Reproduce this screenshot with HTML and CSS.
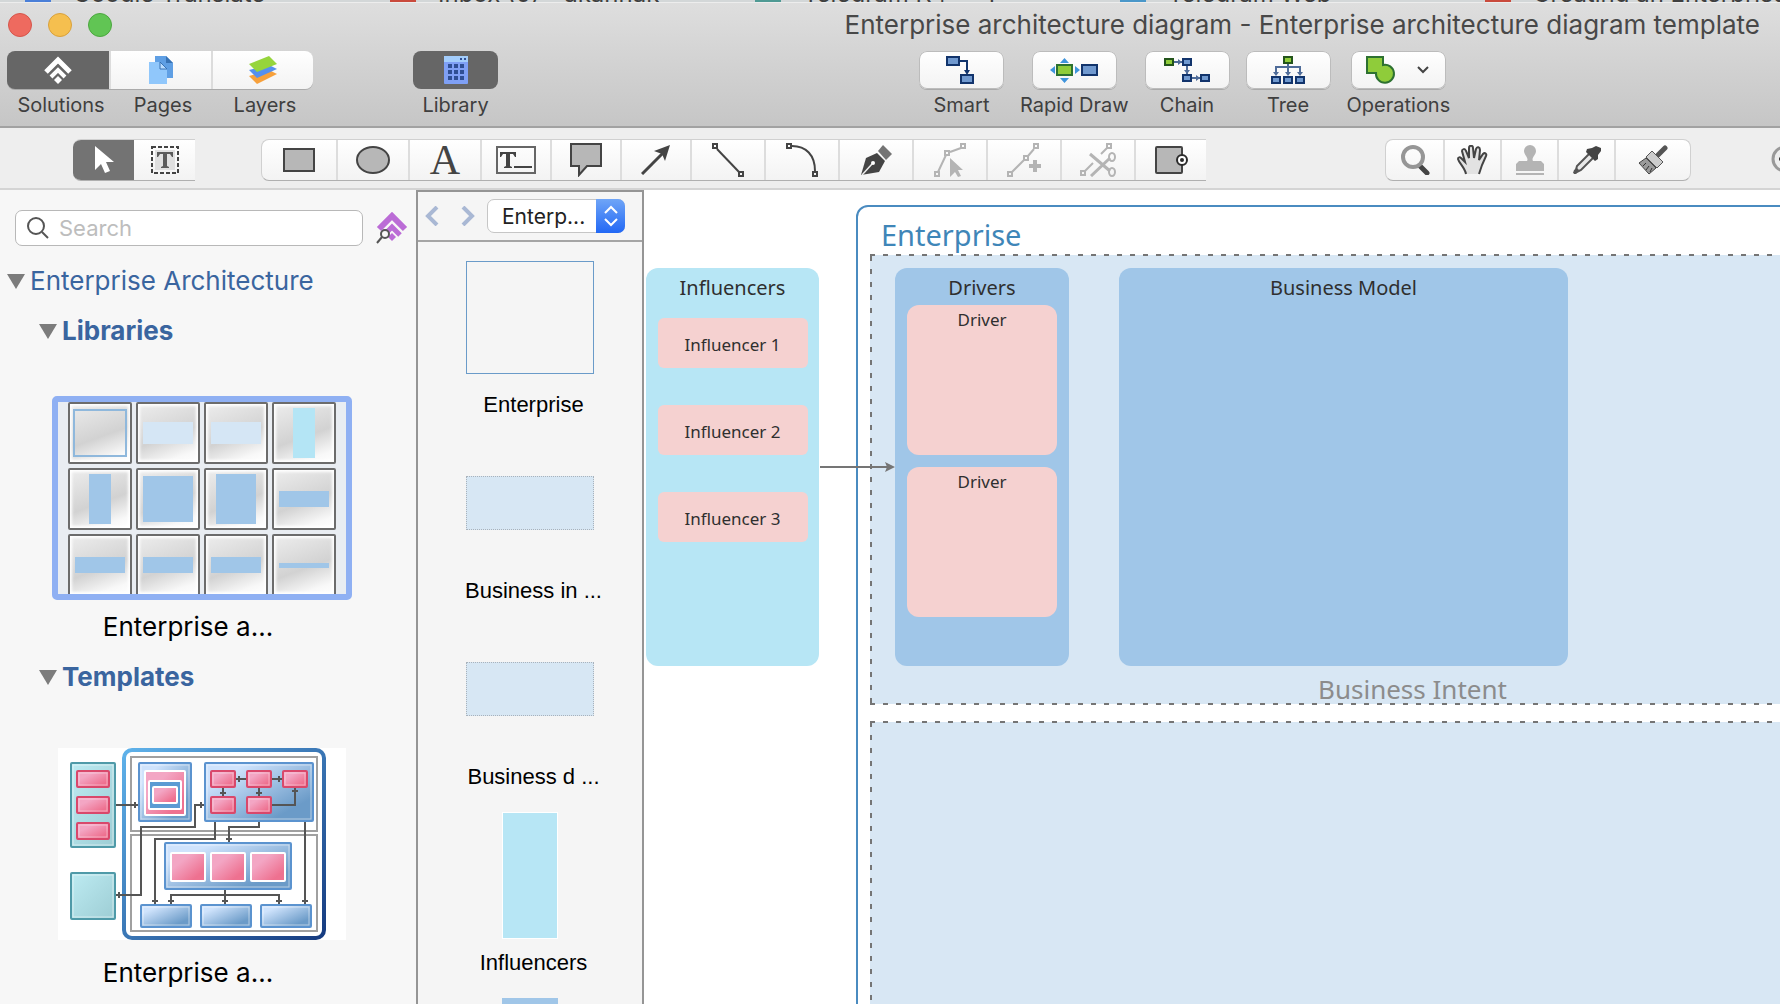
FILE: index.html
```html
<!DOCTYPE html>
<html lang="en">
<head>
	<meta charset="utf-8">
	<title>Enterprise architecture diagram</title>
	<link rel="stylesheet" href="styles.css">
</head>
<body>
	<!-- browser tabs behind the window -->
	<div class="tabs">
		<span class="fav blue"></span><span class="tab">Google Translate</span>
		<span class="fav red"></span><span class="tab">Inbox (0) - akannak</span>
		<span class="fav teal"></span><span class="tab">Telegram K | — Y</span>
		<span class="fav sky"></span><span class="tab">Telegram Web</span>
		<span class="fav red"></span><span class="tab">Creating an Enterprise</span>
	</div>

	<header class="titlebar">
		<div class="title-row">
			<div class="lights">
				<button class="light close" aria-label="Close"></button>
				<button class="light minimize" aria-label="Minimize"></button>
				<button class="light maximize" aria-label="Zoom"></button>
			</div>
			<h1>Enterprise architecture diagram - Enterprise architecture diagram template</h1>
		</div>
		<nav class="main-tools">
			<div class="segments">
				<button class="tool active">
					<span class="face">
						<svg width="28" height="28" viewBox="0 0 28 28" fill="none" stroke="#fff" stroke-width="5"><path d="M2 16L14 4l12 12"/><path d="M7 21l7-7 7 7" stroke-width="4"/><path d="M14 20l4 4-4 4-4-4z" fill="#fff" stroke="none"/></svg>
					</span>
					<span class="label">Solutions</span>
				</button>
				<button class="tool">
					<span class="face">
						<svg width="24" height="28" viewBox="0 0 24 28"><path d="M6 0h11l7 7v15H6z" fill="#5f9fe4"/><path d="M17 0v7h7z" fill="#3873b5"/><path d="M0 6h11l7 7v15H0z" fill="#90c7fb"/><path d="M11 6v7h7z" fill="#b8dcff" stroke="#3873b5"/></svg>
					</span>
					<span class="label">Pages</span>
				</button>
				<button class="tool">
					<span class="face">
						<svg width="28" height="28" viewBox="0 0 28 28"><path d="M0 20l20-6 8 4-20 10z" fill="#f7a13c"/><path d="M0 14l20-5 8 4-20 9z" fill="#5590ef"/><path d="M0 8l20-8 8 8-20 8z" fill="#96d53c"/></svg>
					</span>
					<span class="label">Layers</span>
				</button>
			</div>
			<button class="tool active library">
				<span class="face">
					<svg width="24" height="28" viewBox="0 0 24 28"><rect width="24" height="28" rx="1" fill="#7fa0f5"/><path d="M0 0h24v6H0z" fill="#a3cdfb"/><path d="M16 2h2v2h-2zM20 2h2v2h-2zM4 8h4v4H4zM10 8h4v4h-4zM16 8h4v4h-4zM4 14h4v4H4zM10 14h4v4h-4zM16 14h4v4h-4zM4 20h4v4H4zM10 20h4v4h-4zM16 20h4v4h-4z" fill="#2f4f94"/></svg>
				</span>
				<span class="label">Library</span>
			</button>
			<div class="actions">
				<button class="tool">
					<span class="face">
						<svg width="32" height="28" viewBox="0 0 32 28" fill="#7099cf" stroke="#12346c" stroke-width="2"><path d="M14 5h7v10" fill="none"/><path d="M18 14h6l-3 5z" fill="#12346c" stroke="none"/><rect x="1" y="1" width="12" height="8"/><rect x="15" y="19" width="12" height="8"/></svg>
					</span>
					<span class="label">Smart</span>
				</button>
				<button class="tool">
					<span class="face">
						<svg width="48" height="26" viewBox="0 0 48 26"><path d="M10 6l4.500-5L19 6zM10 21l4.500 5 4.500-5zM5 9v8l-5-4zM25 9v8l5-4z" fill="#3f94dc"/><rect x="7" y="8" width="15" height="10" fill="#8fcc3a" stroke="#2d7131" stroke-width="2"/><rect x="32" y="8" width="15" height="10" fill="#7099cf" stroke="#12346c" stroke-width="2"/></svg>
					</span>
					<span class="label">Rapid Draw</span>
				</button>
				<button class="tool">
					<span class="face">
						<svg width="46" height="26" viewBox="0 0 46 26" stroke-width="2"><path d="M10 5h8M23 9v8M28 21h8" stroke="#4f6c99"/><path d="M14 2v6l4-3zM20 13h6l-3 4zM32 18v6l4-3z" fill="#4f6c99"/><rect x="1" y="2" width="8" height="6" fill="#8fcc3a" stroke="#23541b"/><g fill="#7099cf" stroke="#12346c"><rect x="19" y="2" width="8" height="6"/><rect x="19" y="18" width="8" height="6"/><rect x="37" y="18" width="8" height="6"/></g></svg>
					</span>
					<span class="label">Chain</span>
				</button>
				<button class="tool">
					<span class="face">
						<svg width="34" height="28" viewBox="0 0 34 28" stroke-width="2"><path d="M17 8v10M5 18v-7h24v7" fill="none" stroke="#4f6c99"/><path d="M2 16h6l-3 4zM14 16h6l-3 4zM26 16h6l-3 4z" fill="#4f6c99"/><rect x="13" y="1" width="8" height="6" fill="#8fcc3a" stroke="#23541b"/><g fill="#7099cf" stroke="#12346c"><rect x="1" y="21" width="8" height="6"/><rect x="13" y="21" width="8" height="6"/><rect x="25" y="21" width="8" height="6"/></g></svg>
					</span>
					<span class="label">Tree</span>
				</button>
				<button class="tool">
					<span class="face wide">
						<svg width="30" height="28" viewBox="0 0 30 28"><path d="M1 1h16v8a9 9 0 1 1-7 8H1z" fill="#8fcc3a" stroke="#2d7131" stroke-width="2"/></svg>
						<svg width="14" height="10" viewBox="0 0 14 10"><path d="M2 2l5 5 5-5" fill="none" stroke="#444" stroke-width="2"/></svg>
					</span>
					<span class="label">Operations</span>
				</button>
			</div>
		</nav>
	</header>

	<div class="drawbar">
		<div class="group select-group">
			<button class="active" aria-label="Select"><svg width="20" height="28" viewBox="0 0 20 28"><path d="M1 0v24l6-6 4 9 5-2-4-9h8z" fill="#fff"/></svg></button>
			<button aria-label="Select text"><svg width="28" height="28" viewBox="0 0 28 28"><path d="M4 4h20v20H4z" fill="#e0e0e0"/><rect x="1" y="1" width="26" height="26" fill="none" stroke="#444" stroke-width="2" stroke-dasharray="4 2"/><path d="M6 6h16v5h-1l-2-3h-3v12l2 1v1h-8v-1l2-1V8H9l-2 3H6z" fill="#5a5a5a"/></svg></button>
		</div>
		<div class="group shape-group">
			<button aria-label="Rectangle"><svg width="32" height="24" viewBox="0 0 32 24"><rect x="1" y="1" width="30" height="22" fill="#b7b7b7" stroke="#444" stroke-width="2"/></svg></button>
			<button class="medium" aria-label="Ellipse"><svg width="34" height="28" viewBox="0 0 34 28"><ellipse cx="17" cy="14" rx="16" ry="13" fill="#b7b7b7" stroke="#444" stroke-width="2"/></svg></button>
			<button class="medium letter">A</button>
			<button class="narrow" aria-label="Text box"><svg width="40" height="28" viewBox="0 0 40 28"><rect x="1" y="1" width="38" height="26" fill="none" stroke="#666" stroke-width="2"/><path d="M4 6h16v5h-1l-2-3h-3v12l2 1v1H8v-1l2-1V8H7l-2 3H4zM18 20h18v2H18z" fill="#444"/></svg></button>
			<button class="narrow" aria-label="Callout"><svg width="32" height="34" viewBox="0 0 32 34"><path d="M1 1h30v22H17l-8 9v-9H1z" fill="#b7b7b7" stroke="#444" stroke-width="2"/></svg></button>
			<button class="narrow" aria-label="Arrow"><svg width="30" height="30" viewBox="0 0 30 30"><path d="M1 29L22 8" stroke="#444" stroke-width="3"/><path d="M29 0l-5 16-3-7-8-3z" fill="#444"/></svg></button>
			<button aria-label="Line"><svg width="32" height="34" viewBox="0 0 32 34" fill="none" stroke="#444" stroke-width="2"><path d="M5 6l22 23"/><path d="M1 1h4v4H1zM27 29h4v4h-4z"/></svg></button>
			<button aria-label="Arc"><svg width="32" height="34" viewBox="0 0 32 34" fill="none" stroke="#444" stroke-width="2"><path d="M6 3c14 0 23 9 23 25"/><path d="M1 1h4v4H1zM27 29h4v4h-4z"/></svg></button>
			<button aria-label="Pen"><svg width="31" height="31" viewBox="0 0 31 31"><path d="M0 30L5 13l11-5 8 8-6 11z" fill="#444"/><path d="M1 30l10-11" stroke="#eee" stroke-width="1.500"/><circle cx="12" cy="18" r="2" fill="#fff"/><path d="M17 6l5-6 9 9-6 6z" fill="#747474"/></svg></button>
			<button aria-label="Edit points"><svg width="32" height="34" viewBox="0 0 32 34" fill="none" stroke="#b4b4b4" stroke-width="2"><path d="M4 29L12 12M16 9l11-4"/><path d="M1 29h4v4H1zM11 8h4v4h-4zM27 1h4v4h-4z"/><path d="M16 15v19l5-5 3 5 3-1-3-6h5z" fill="#b4b4b4" stroke="none"/></svg></button>
			<button aria-label="Add point"><svg width="34" height="34" viewBox="0 0 34 34" fill="none" stroke="#b4b4b4" stroke-width="2"><path d="M5 29l12-12M21 13l6-7"/><path d="M1 29h4v4H1zM17 13h4v4h-4zM27 1h4v4h-4z"/><path d="M28 17v12M22 23h12" stroke-width="4"/></svg></button>
			<button aria-label="Split"><svg width="36" height="34" viewBox="0 0 36 34" fill="none" stroke="#b4b4b4" stroke-width="2"><path d="M5 28l8-8M21 11l6-6"/><path d="M1 28h4v4H1zM27 1h4v4h-4z"/><path d="M10 11l20 17M11 33l19-18" stroke-width="3"/><ellipse cx="32" cy="14" rx="3" ry="4"/><ellipse cx="32" cy="29" rx="3" ry="4"/></svg></button>
			<button class="medium" aria-label="Action"><svg width="33" height="28" viewBox="0 0 33 28"><rect x="1" y="1" width="26" height="26" rx="1" fill="#b7b7b7" stroke="#444" stroke-width="2"/><circle cx="27" cy="14" r="5" fill="#fff" stroke="#2b2b2b" stroke-width="2"/><circle cx="27" cy="14" r="2" fill="#2b2b2b"/></svg></button>
		</div>
		<div class="group view-group">
			<button aria-label="Magnifier"><svg width="30" height="30" viewBox="0 0 30 30" fill="none"><path d="M20 21l7 7" stroke="#444" stroke-width="5" stroke-linecap="round"/><circle cx="13" cy="12" r="10" stroke="#969696" stroke-width="4"/></svg></button>
			<button aria-label="Hand"><svg width="32" height="30" viewBox="0 0 32 30"><path d="M9 29C8 23 2 18 1 14c0-2 2-2 3-1l4 4L5 6c0-2 3-3 4 0l3 7V3c0-3 4-3 4 0l1 10 2-9c1-3 4-2 4 1l-1 10 4-6c2-2 4 0 3 2l-4 9-3 9" fill="#e2e2e2" stroke="#444" stroke-width="2"/></svg></button>
			<button aria-label="Stamp"><svg width="28" height="30" viewBox="0 0 28 30"><path d="M11 16c2-3-3-6-3-10a6 6 0 0 1 12 0c0 4-5 7-3 10h8l3 3v7H0v-7l3-3zM0 28h28v2H0z" fill="#b4b4b4"/></svg></button>
			<button aria-label="Eyedropper"><svg width="28" height="28" viewBox="0 0 28 28"><path d="M2 27l2-7L17 7l4 4L8 24z" fill="#e8e8e8" stroke="#555" stroke-width="2"/><path d="M1 24l3-2 2 2-3 4-3-1z" fill="#555"/><path d="M14 3l5-1 4-2 5 2v3l-3 4v4l-3 2-9-9z" fill="#444"/></svg></button>
			<button class="format" aria-label="Format brush"><svg width="30" height="30" viewBox="0 0 30 30"><path d="M20 10l7-7" stroke="#555" stroke-width="5" stroke-linecap="round"/><path d="M8 13l10 10-7 6L1 18z" fill="#9a9a9a" stroke="#444"/><path d="M14 6l11 11-6 6L8 12z" fill="#ccc" stroke="#555"/><path d="M5 21l3-3M8 25l3-4M12 27l2-4" stroke="#333"/></svg></button>
		</div>
		<button class="zoom-out" aria-label="Zoom out"><svg width="30" height="30" viewBox="0 0 30 30" fill="none"><circle cx="14" cy="14" r="12" stroke="#999" stroke-width="3"/><path d="M8 14h12" stroke="#333" stroke-width="3"/></svg></button>
	</div>

	<main>
		<aside class="sidebar">
			<div class="search-row">
				<label class="search">
					<svg width="22" height="22" viewBox="0 0 22 22" fill="none" stroke="#555" stroke-width="2"><circle cx="9" cy="9" r="8"/><path d="M15 15l6 6"/></svg>
					<input type="text" placeholder="Search" aria-label="Search">
				</label>
				<button class="find" aria-label="Find solutions"><svg width="32" height="32" viewBox="0 0 32 32"><g fill="none" stroke="#bb6cd6" stroke-width="6"><path d="M3 17L16 4l13 13"/><path d="M8 23l8-8 8 8" stroke-width="5"/></g><path d="M16 21l4 4-4 4-4-4z" fill="#bb6cd6"/><circle cx="9" cy="22" r="4" fill="#f7f7f7" stroke="#555" stroke-width="2"/><path d="M1 31l5-6" stroke="#555" stroke-width="2"/></svg></button>
			</div>
			<h2><span class="arrow"></span>Enterprise Architecture</h2>
			<h3><span class="arrow"></span>Libraries</h3>
			<figure class="solution">
				<div class="thumb selected">
					<div class="cells">
						<span class="cell"><i class="outline"></i></span>
						<span class="cell"><i class="pale"></i></span>
						<span class="cell"><i class="pale"></i></span>
						<span class="cell"><i class="cyan tall"></i></span>
						<span class="cell"><i class="tall"></i></span>
						<span class="cell"><i class="big"></i></span>
						<span class="cell"><i class="mid"></i></span>
						<span class="cell"><i></i></span>
						<span class="cell"><i></i></span>
						<span class="cell"><i></i></span>
						<span class="cell"><i></i></span>
						<span class="cell"><i class="thin"></i></span>
					</div>
				</div>
				<figcaption>Enterprise a...</figcaption>
			</figure>
			<h3><span class="arrow"></span>Templates</h3>
			<figure class="solution">
				<div class="thumb">
					<svg width="288" height="192" viewBox="0 0 288 192">
						<defs>
							<linearGradient id="frame" x1="0" y1="0" x2="1" y2="1"><stop offset="0" stop-color="#5fb2ea"/><stop offset="1" stop-color="#163b80"/></linearGradient>
							<linearGradient id="box" x1="0" y1="0" x2="1" y2="1"><stop offset=".2" stop-color="#cfe3fc"/><stop offset=".8" stop-color="#6b9bc8"/></linearGradient>
							<linearGradient id="pink" x1="0" y1="0" x2="1" y2="1"><stop offset=".3" stop-color="#f3a6c4"/><stop offset=".8" stop-color="#ee7190"/></linearGradient>
							<linearGradient id="teal" x1="0" y1="0" x2="1" y2="1"><stop offset="0" stop-color="#bdebf2"/><stop offset="1" stop-color="#9dcdd4"/></linearGradient>
						</defs>
						<rect width="288" height="192" fill="#fff"/>
						<rect x="66" y="2" width="200" height="188" rx="8" fill="#fff" stroke="url(#frame)" stroke-width="4"/>
						<g fill="none" stroke="#a0a0a0" stroke-width="2"><rect x="73" y="9" width="186" height="74"/><rect x="73" y="87" width="186" height="96"/></g>
						<g fill="url(#teal)" stroke="#4f9aa8" stroke-width="2"><rect x="13" y="15" width="44" height="84" rx="1"/><rect x="13" y="125" width="44" height="46" rx="1"/></g>
						<g fill="url(#box)" stroke="#5b93cf" stroke-width="2"><rect x="81" y="15" width="52" height="58" rx="1"/><rect x="147" y="15" width="108" height="58" rx="1"/><rect x="107" y="95" width="126" height="46" rx="1"/><rect x="83" y="157" width="50" height="22" rx="1"/><rect x="143" y="157" width="50" height="22" rx="1"/><rect x="203" y="157" width="50" height="22" rx="1"/></g>
						<g fill="none" stroke="#fff" stroke-opacity=".5"><rect x="15" y="17" width="40" height="80"/><rect x="15" y="127" width="40" height="42"/><rect x="83" y="17" width="48" height="54"/><rect x="149" y="17" width="104" height="54"/><rect x="109" y="97" width="122" height="42"/><rect x="85" y="159" width="46" height="18"/><rect x="145" y="159" width="46" height="18"/><rect x="205" y="159" width="46" height="18"/></g>
						<g fill="url(#pink)" stroke="#d9486b" stroke-width="2"><rect x="19" y="23" width="32" height="16" rx="1"/><rect x="19" y="49" width="32" height="16" rx="1"/><rect x="19" y="75" width="32" height="16" rx="1"/><rect x="153" y="23" width="24" height="16" rx="1"/><rect x="189" y="23" width="24" height="16" rx="1"/><rect x="225" y="23" width="24" height="16" rx="1"/><rect x="153" y="49" width="24" height="16" rx="1"/><rect x="189" y="49" width="24" height="16" rx="1"/></g>
						<g fill="none" stroke="#fff" stroke-opacity=".4"><rect x="21" y="25" width="28" height="12"/><rect x="21" y="51" width="28" height="12"/><rect x="21" y="77" width="28" height="12"/><rect x="155" y="25" width="20" height="12"/><rect x="191" y="25" width="20" height="12"/><rect x="227" y="25" width="20" height="12"/><rect x="155" y="51" width="20" height="12"/><rect x="191" y="51" width="20" height="12"/></g>
						<g fill="url(#pink)" stroke="#fff" stroke-width="2"><rect x="87" y="23" width="40" height="44" rx="1"/><rect x="91" y="33" width="32" height="28" rx="1" fill="#5b9bd3"/><rect x="95" y="39" width="24" height="16" rx="1"/><rect x="113" y="105" width="34" height="28" rx="1"/><rect x="153" y="105" width="34" height="28" rx="1"/><rect x="193" y="105" width="34" height="28" rx="1"/></g>
						<path d="M58 57h22M146 57h-9v22H83v68H58M157 74v17H97v65M201 74v5h-30v15M247 74v82M167 142v14M113 156v-9h108v9M178 31h10M214 31h10M165 40v8M201 40v8M214 57h23V40" fill="none" stroke="#555" stroke-width="2"/>
						<path d="M77 54v6M143 54v6M61 144v6M94 153h6M168 91h6M244 153h6M164 153h6M110 153h6M218 153h6M181 28v6M221 28v6M162 45h6M198 45h6M234 43h6" stroke="#555" stroke-width="2"/>
					</svg>
				</div>
				<figcaption>Enterprise a...</figcaption>
			</figure>
		</aside>

		<section class="library-panel">
			<div class="library-head">
				<button class="nav" aria-label="Previous library"><svg width="14" height="20" viewBox="0 0 14 20"><path d="M12 1L3 10l9 9" fill="none" stroke="#a9b8d4" stroke-width="4"/></svg></button>
				<button class="nav" aria-label="Next library"><svg width="14" height="20" viewBox="0 0 14 20"><path d="M2 1l9 9-9 9" fill="none" stroke="#a9b8d4" stroke-width="4"/></svg></button>
				<div class="picker">
					<select aria-label="Library"><option>Enterp...</option></select>
					<span class="stepper"><svg width="14" height="22" viewBox="0 0 14 22"><path d="M1 8l6-6 6 6M1 14l6 6 6-6" fill="none" stroke="#fff" stroke-width="2"/></svg></span>
				</div>
			</div>
			<div class="stencils">
				<figure><div class="stencil"><span class="s-frame"></span></div><figcaption>Enterprise</figcaption></figure>
				<figure><div class="stencil"><span class="s-dotted"></span></div><figcaption>Business in ...</figcaption></figure>
				<figure><div class="stencil"><span class="s-dotted"></span></div><figcaption>Business d ...</figcaption></figure>
				<figure><div class="stencil"><span class="s-cyan"></span></div><figcaption>Influencers</figcaption></figure>
				<figure><div class="stencil"><span class="s-blue"></span></div></figure>
			</div>
		</section>

		<section class="canvas">
			<div class="enterprise">Enterprise</div>
			<div class="zone intent">Business Intent</div>
			<div class="zone design"></div>
			<svg class="lines" width="1200" height="900" viewBox="0 0 1200 900">
				<path d="M226 65H1200M227 66V514M226 514H1200M226 532H1200M227 532V900" fill="none" stroke="#757575" stroke-width="2" stroke-dasharray="5 8"/>
				<path d="M176 277h68" stroke="#757575" stroke-width="2"/>
				<path d="M241 272l10 5-10 5 2-5z" fill="#757575"/>
			</svg>
			<div class="node influencers">
				Influencers
				<div class="influencer">Influencer 1</div>
				<div class="influencer">Influencer 2</div>
				<div class="influencer">Influencer 3</div>
			</div>
			<div class="node drivers">
				Drivers
				<div class="driver">Driver</div>
				<div class="driver">Driver</div>
			</div>
			<div class="node model">Business Model</div>
		</section>
	</main>
</body>
</html>
```
FILE: styles.css
```css
*
{
	box-sizing: border-box;
}
html, body
{
	height: 100%;
}
body
{
	margin: 0;
	display: flex;
	flex-direction: column;
	overflow: hidden;
	background: #fff;
	font-family: Inter, "Liberation Sans", sans-serif;
	color: #3f3f3f;
}
button
{
	margin: 0;
	padding: 0;
	border: 0;
	background: none;
	font: inherit;
	color: inherit;
}
svg
{
	display: block;
	flex: none;
}
figure, h1, h2, h3
{
	margin: 0;
	font-weight: normal;
}

/* tabs behind the window */
.tabs
{
	flex: none;
	display: flex;
	align-items: flex-end;
	height: 2px;
	padding-left: 25px;
	overflow: hidden;
	background: #d3d7d8;
	font-size: 24px;
	line-height: 16px;
	white-space: nowrap;
}
.fav
{
	flex: none;
	width: 26px;
	height: 2px;
	margin-right: 22px;
}
.tab
{
	flex: none;
	width: 317px;
}
.blue { background: #4a7fd8; }
.red { background: #c94a3c; }
.teal { background: #4f9a94; }
.sky { background: #4a97c9; }

/* title bar */
.titlebar
{
	flex: none;
	height: 126px;
	border-top: 1px solid #ededed;
	border-bottom: 2px solid #a2a2a2;
	background: linear-gradient(#dedede, #c6c6c6);
}
.title-row
{
	display: flex;
	align-items: center;
	justify-content: space-between;
	height: 44px;
	margin-bottom: 4px;
	padding: 0 20px 0 8px;
}
.title-row h1
{
	font-size: 26px;
	line-height: 30px;
	white-space: nowrap;
	color: #484848;
}
.lights
{
	display: flex;
	gap: 16px;
}
.light
{
	width: 24px;
	height: 24px;
	border: 1px solid;
	border-radius: 50%;
}
.close { background: #ee6a5f; border-color: #d5554b; }
.minimize { background: #f5bf4f; border-color: #d9a13c; }
.maximize { background: #61c554; border-color: #4ca73f; }

.main-tools
{
	display: flex;
	padding-left: 7px;
}
.segments
{
	display: flex;
}
.tool
{
	display: flex;
	flex-direction: column;
	align-items: center;
	min-width: 85px;
}
.face
{
	display: flex;
	align-items: center;
	justify-content: center;
	width: 85px;
	height: 38px;
	border-radius: 8px;
	background: linear-gradient(#fff, #f3f3f3);
	box-shadow: 0 0 0 1px #bcbcbc inset, 0 1px 0 #aaa;
}
.label
{
	margin-top: 4px;
	font-size: 20px;
	line-height: 24px;
	white-space: nowrap;
}
.active .face
{
	background: #666;
	box-shadow: none;
}
.segments .face
{
	width: 102px;
	border-radius: 0;
	box-shadow: 0 1px 0 #aaa;
	border-left: 2px solid #dcdcdc;
}
.segments .label
{
	padding-left: 6px;
}
.segments .tool:first-child .face
{
	border: 0;
	border-radius: 8px 0 0 8px;
}
.segments .tool:last-child .face
{
	border-radius: 0 8px 8px 0;
}
.library
{
	margin-left: 100px;
}
.actions
{
	display: flex;
	gap: 16px;
	margin-left: 421px;
}
.face.wide
{
	width: 95px;
	gap: 20px;
}

/* drawing toolbar */
.drawbar
{
	flex: none;
	display: flex;
	align-items: center;
	height: 62px;
	padding: 4px 0 0 73px;
	overflow: hidden;
	border-bottom: 2px solid #d4d4d4;
	background: #eee;
}
.group
{
	flex: none;
	display: flex;
	height: 42px;
	border: 1px solid #d0d0d0;
	border-bottom-color: #b0b0b0;
	background: linear-gradient(#fff, #f3f3f3);
}
.group button
{
	display: flex;
	align-items: center;
	justify-content: center;
	width: 74px;
}
.group button + button
{
	border-left: 2px solid #ddd;
}
.select-group
{
	margin-right: 66px;
	border-right: 0;
	border-left: 0;
	border-radius: 8px 0 0 8px;
	overflow: hidden;
}
.select-group button
{
	width: 61px;
}
.select-group .active
{
	background: #737373;
}
.select-group button + button
{
	border: 0;
}
.shape-group
{
	margin-right: 179px;
	border-right: 0;
	border-radius: 8px 0 0 8px;
}
.group .medium
{
	width: 72px;
}
.group .narrow
{
	width: 70px;
}
.group .letter
{
	font: 42px/36px "Liberation Serif", serif;
	color: #444;
}
.view-group
{
	margin-right: 80px;
	border-radius: 8px;
}
.view-group button
{
	width: 57px;
}
.group .format
{
	width: 76px;
}
.zoom-out
{
	flex: none;
}

main
{
	flex: 1;
	display: flex;
	min-height: 0;
}

/* solutions */
.sidebar
{
	flex: none;
	width: 416px;
	overflow: hidden;
	background: #f7f7f7;
	color: #000;
}
.search-row
{
	display: flex;
	align-items: center;
	gap: 13px;
	padding: 20px 0 0 15px;
}
.search
{
	display: flex;
	align-items: center;
	gap: 10px;
	width: 348px;
	height: 36px;
	padding-left: 11px;
	border: 1px solid #b8b8b8;
	border-radius: 7px;
	background: #fff;
}
.search input
{
	width: 280px;
	padding: 0;
	border: 0;
	outline: 0;
	background: none;
	font: 22px Inter, sans-serif;
}
.search input::placeholder
{
	color: #bdbdbd;
}
.sidebar h2, .sidebar h3
{
	display: flex;
	align-items: center;
	gap: 5px;
	font-size: 26px;
	line-height: 32px;
	color: #3a659f;
}
.sidebar h2
{
	margin-top: 19px;
	padding-left: 7px;
}
.sidebar h3
{
	margin-top: 18px;
	padding-left: 39px;
	font-weight: 700;
}
.arrow
{
	border: 9px solid transparent;
	border-top: 15px solid #7c7c7c;
	border-bottom: 0;
}
.solution
{
	display: flex;
	flex-direction: column;
	align-items: center;
	width: 404px;
	padding-top: 49px;
}
.thumb
{
	border: 6px solid transparent;
	border-radius: 5px;
}
.thumb.selected
{
	border-color: #8fb0f3;
}
.solution figcaption
{
	padding-right: 28px;
	margin-top: 10px;
	font-size: 26px;
	line-height: 33px;
}
.cells
{
	display: grid;
	grid-template-columns: repeat(4, 64px);
	grid-auto-rows: 62px;
	gap: 4px;
	width: 288px;
	height: 192px;
	padding-left: 10px;
	overflow: hidden;
	background: #e9edf2;
}
.cell
{
	display: flex;
	align-items: center;
	justify-content: center;
	border: 2px solid #6c6c6c;
	border-radius: 2px;
	background: linear-gradient(160deg, #ededed, #d2d2d2 55%, #f8f8f8 85%, #fff);
	box-shadow: 0 0 3px 2px #fff inset;
}
.cell i
{
	width: 50px;
	height: 16px;
	background: #a0c6e8;
}
.cell .outline
{
	width: 54px;
	height: 48px;
	border: 2px solid #8fb8dc;
	background: none;
}
.cell .pale { height: 22px; background: #d5e6f5; }
.cell .tall { width: 22px; height: 50px; }
.cell .cyan { background: #b4e5f5; }
.cell .big { height: 46px; }
.cell .mid { width: 40px; height: 50px; }
.cell .thin { height: 5px; }

/* library panel */
.library-panel
{
	flex: none;
	width: 228px;
	overflow: hidden;
	border: 2px solid #959595;
	border-bottom: 0;
	background: #f5f5f5;
	color: #000;
}
.library-head
{
	display: flex;
	align-items: center;
	height: 50px;
	padding-left: 7px;
	border-bottom: 2px solid #a5a5a5;
}
.nav
{
	margin-right: 22px;
}
.nav + .nav
{
	margin-right: 12px;
}
.picker
{
	position: relative;
	width: 138px;
	height: 34px;
}
.picker select
{
	appearance: none;
	width: 100%;
	height: 100%;
	padding: 0 0 0 14px;
	border: 1px solid #c6c6c6;
	border-radius: 7px;
	background: #fff;
	font: 21px Inter, sans-serif;
	color: #222;
}
.stepper
{
	position: absolute;
	top: 0;
	right: 0;
	display: flex;
	align-items: center;
	justify-content: center;
	width: 29px;
	height: 34px;
	border-radius: 0 7px 7px 0;
	background: linear-gradient(#6fa5f7, #2268f5);
	pointer-events: none;
}
.stencils figure
{
	height: 186px;
	padding-top: 10px;
	text-align: center;
}
.stencil
{
	display: flex;
	align-items: center;
	justify-content: center;
	height: 130px;
}
.stencils figcaption
{
	padding: 10px 0 0 7px;
	font: 22px/26px "Liberation Sans", sans-serif;
}
.s-frame
{
	width: 128px;
	height: 113px;
	border: 1px solid #6a9bc9;
}
.s-dotted
{
	width: 128px;
	height: 54px;
	border: 1px dotted #a9b2bb;
	background: #d7e7f4;
}
.s-cyan
{
	width: 56px;
	height: 127px;
	border: 1px solid #fff;
	background: #b7e6f5;
}
.s-blue
{
	width: 56px;
	height: 127px;
	background: #a0c6e8;
}

/* diagram */
.canvas
{
	position: relative;
	flex: 1;
	overflow: hidden;
	background: #fff;
	font-family: "Noto Sans", sans-serif;
	color: #2f2f2f;
}
.enterprise
{
	position: absolute;
	top: 15px;
	left: 212px;
	right: -20px;
	bottom: -20px;
	padding: 9px 0 0 23px;
	border: 2px solid #4a8bc0;
	border-radius: 12px;
	font-size: 29px;
	line-height: 38px;
	color: #3f86b8;
}
.zone
{
	position: absolute;
	left: 226px;
	right: 0;
	background: #d8e7f4;
}
.intent
{
	top: 65px;
	height: 449px;
	padding: 416px 0 0 448px;
	font-size: 26px;
	line-height: 36px;
	color: #8c8c8c;
}
.design
{
	top: 532px;
	bottom: 0;
}
.lines
{
	position: absolute;
	top: 0;
	left: 0;
}
.node
{
	position: absolute;
	top: 78px;
	height: 398px;
	padding-top: 7px;
	border-radius: 12px;
	background: #a0c6e8;
	font-size: 20px;
	line-height: 26px;
	text-align: center;
}
.influencers
{
	left: 2px;
	width: 173px;
	background: #b7e6f5;
}
.drivers
{
	left: 251px;
	width: 174px;
}
.model
{
	left: 475px;
	width: 449px;
}
.influencer
{
	width: 150px;
	height: 50px;
	margin: 17px auto 37px;
	border-radius: 6px;
	background: #f5d1d0;
	font-size: 17px;
	line-height: 54px;
}
.driver
{
	width: 150px;
	height: 150px;
	margin: 4px auto 12px;
	padding-top: 2px;
	border-radius: 12px;
	background: #f5d1d0;
	font-size: 17px;
}
```
